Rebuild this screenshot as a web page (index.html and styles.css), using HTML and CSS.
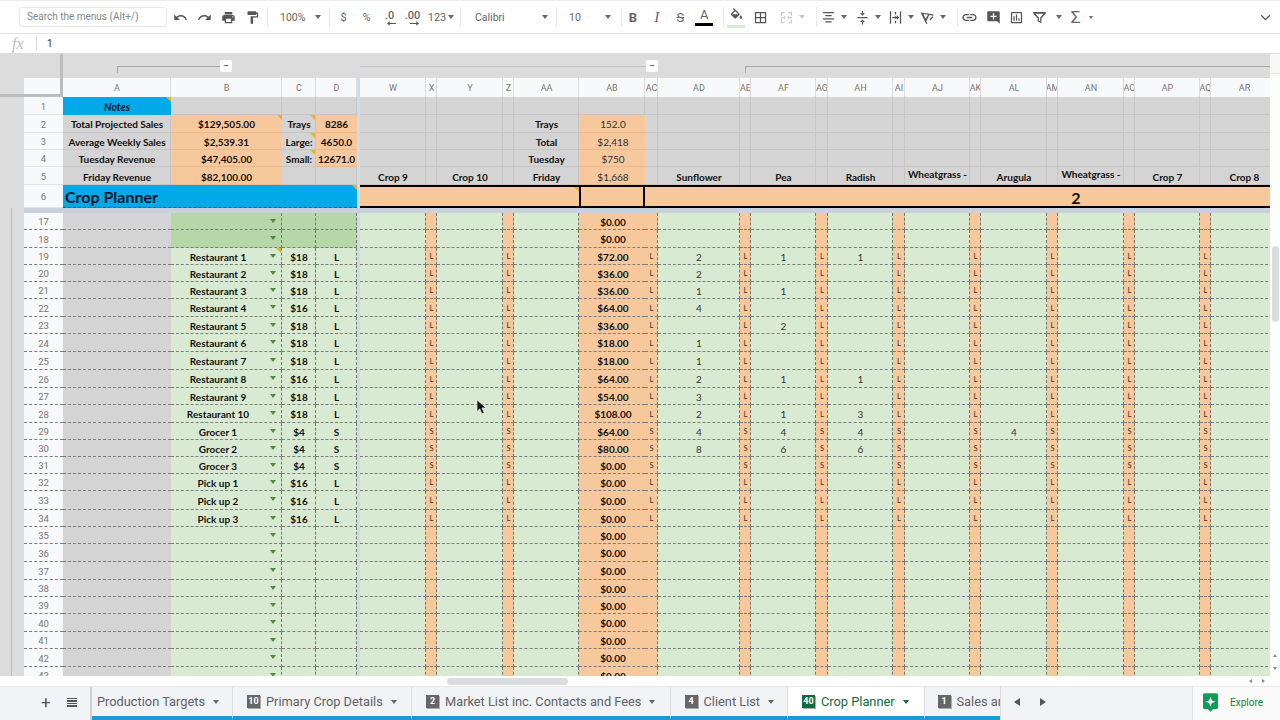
FILE: index.html
```html
<!DOCTYPE html>
<html lang="en">
<head>
<meta charset="utf-8">
<title>Crop Planner</title>
<link rel="stylesheet" href="styles.css">
</head>
<body>
<div class="app">
  <div class="toolbar">
    <div class="search">Search the menus (Alt+/)</div>
    <div class="ti w24"><svg viewBox="0 0 24 24"><path d="M12.5 8c-2.65 0-5.05.99-6.9 2.6L2 7v9h9l-3.62-3.62c1.39-1.16 3.16-1.88 5.12-1.88 3.54 0 6.55 2.31 7.6 5.5l2.37-.78C21.08 11.03 17.15 8 12.5 8z"/></svg></div>
    <div class="ti w24"><svg viewBox="0 0 24 24"><path d="M18.4 10.6C16.55 8.99 14.15 8 11.5 8c-4.65 0-8.58 3.03-9.96 7.22L3.9 16c1.05-3.19 4.05-5.5 7.6-5.5 1.95 0 3.73.72 5.12 1.88L13 16h9V7l-3.6 3.6z"/></svg></div>
    <div class="ti w24"><svg viewBox="0 0 24 24"><path d="M19 8H5c-1.66 0-3 1.34-3 3v6h4v4h12v-4h4v-6c0-1.66-1.34-3-3-3zm-3 11H8v-5h8v5zm3-7c-.55 0-1-.45-1-1s.45-1 1-1 1 .45 1 1-.45 1-1 1zm-1-9H6v4h12V3z"/></svg></div>
    <div class="ti w24"><svg viewBox="0 0 24 24"><path d="M18 4V3c0-.55-.45-1-1-1H5c-.55 0-1 .45-1 1v4c0 .55.45 1 1 1h12c.55 0 1-.45 1-1V6h1v4H9v11c0 .55.45 1 1 1h2c.55 0 1-.45 1-1v-9h8V4h-3z"/></svg></div>
    <div class="sep sep-3"></div>
    <div class="sel sel-zoom"><span>100%</span><i class="caret"></i></div>
    <div class="sep"></div>
    <div class="tt w23 first-fmt">$</div>
    <div class="tt w23">%</div>
    <div class="tt w23 dec">.0<svg viewBox="0 0 10 5"><path d="M10 2H3V0L0 2.500 3 5V3h7z"/></svg></div>
    <div class="tt w23 dec">.00<svg viewBox="0 0 10 5"><path d="M0 2h7V0l3 2.500L7 5V3H0z"/></svg></div>
    <div class="tt w36 num-fmt">123<i class="caret caret-near"></i></div>
    <div class="sep"></div>
    <div class="sel sel-font"><span>Calibri</span><i class="caret"></i></div>
    <div class="sep"></div>
    <div class="sel sel-size"><span>10</span><i class="caret"></i></div>
    <div class="sep"></div>
    <div class="tt w24 bold">B</div>
    <div class="tt w24 ital">I</div>
    <div class="tt w24 strike">S</div>
    <div class="tt w24 color-a"><span>A</span><i class="bar bar-black"></i></div>
    <div class="sep sep-7"></div>
    <div class="ti w25 fill"><svg viewBox="0 0 24 24"><path d="M16.56 8.94L7.620 0 6.210 1.410l2.380 2.380-5.150 5.150c-.59.59-.59 1.540 0 2.120l5.500 5.500c.29.29.68.44 1.060.44s.77-.15 1.060-.44l5.500-5.500c.59-.58.59-1.530 0-2.120zM5.210 10L10 5.210 14.790 10H5.210zM19 11.500s-2 2.170-2 3.500c0 1.100.9 2 2 2s2-.9 2-2c0-1.330-2-3.500-2-3.500z"/></svg><i class="bar bar-green"></i></div>
    <div class="ti w24"><svg viewBox="0 0 24 24"><path d="M3 3v18h18V3H3zm8 16H5v-6h6v6zm0-8H5V5h6v6zm8 8h-6v-6h6v6zm0-8h-6V5h6v6z"/></svg></div>
    <div class="ti w38 off"><svg viewBox="0 0 24 24"><path d="M3 3h6v2H5v4H3zM15 3h6v6h-2V5h-4zM3 15h2v4h4v2H3zM19 15h2v6h-6v-2h4zM3 11h5V9l3 3-3 3v-2H3zM21 11h-5V9l-3 3 3 3v-2h5z"/></svg><i class="caret caret-light"></i></div>
    <div class="sep sep-5"></div>
    <div class="ti w35"><svg viewBox="0 0 24 24"><path d="M3 3h18v2H3zM7 8h10v2H7zM3 13h18v2H3zM7 18h10v2H7z"/></svg><i class="caret"></i></div>
    <div class="ti w33"><svg viewBox="0 0 24 24"><path d="M8 19h3v4h2v-4h3l-4-4-4 4zm8-14h-3V1h-2v4H8l4 4 4-4zM4 11v2h16v-2H4z"/></svg><i class="caret"></i></div>
    <div class="ti w32"><svg viewBox="0 0 24 24"><path d="M3 2h2v20H3zM19 2h2v20h-2zM11 3h2v4h-2zM11 10h2v4h-2zM11 17h2v4h-2zM7 11h7V8l4 4-4 4v-3H7z"/></svg><i class="caret"></i></div>
    <div class="ti w33"><svg viewBox="0 0 24 24"><path d="M2 4l20 3-1 2-6-.9-5 9.900 2 3.500-2 1-9-18.500zM5.500 6.500l3.500 7.500 3.800-6.300zM15 15l5-5 1.500 1.500-5 5z"/></svg><i class="caret"></i></div>
    <div class="sep sep-7"></div>
    <div class="ti w24 link"><svg viewBox="0 0 24 24"><path d="M3.900 12c0-1.710 1.390-3.100 3.100-3.100h4V7H7c-2.760 0-5 2.240-5 5s2.240 5 5 5h4v-1.900H7c-1.710 0-3.100-1.390-3.100-3.100zM8 13h8v-2H8v2zm9-6h-4v1.900h4c1.710 0 3.100 1.390 3.100 3.100s-1.390 3.100-3.100 3.100h-4V17h4c2.760 0 5-2.240 5-5s-2.240-5-5-5z"/></svg></div>
    <div class="ti w24"><svg viewBox="0 0 24 24"><path d="M20 2H4c-1.100 0-2 .9-2 2v12c0 1.100.9 2 2 2h14l4 4V4c0-1.100-.9-2-2-2zm-3 9h-4v4h-2v-4H7V9h4V5h2v4h4v2z"/></svg></div>
    <div class="ti w23"><svg viewBox="0 0 24 24"><path d="M9 17H7v-7h2v7zm4 0h-2V7h2v10zm4 0h-2v-4h2v4zm2 2H5V5h14v14zm0-16H5c-1.100 0-2 .9-2 2v14c0 1.100.9 2 2 2h14c1.100 0 2-.9 2-2V5c0-1.100-.9-2-2-2z"/></svg></div>
    <div class="ti w38"><svg viewBox="0 0 24 24"><path d="M2 3h20v2.500l-7 8V21l-6-3v-4.500l-7-8zM5.500 6l5.500 6.500v4.300l2 1V12.500L18.500 6z"/></svg><i class="caret caret-gap"></i></div>
    <div class="tt w32 sigma"><span>Σ</span><i class="caret caret-small"></i></div>
    <div class="chev"><svg viewBox="0 0 24 24"><path d="M4 8l8 8 8-8" /></svg></div>
  </div>
  <div class="formula">
    <span class="fx">fx</span><span class="fx-sep"></span><span class="fx-val">1</span>
  </div>
  <div class="sheet">
    <div class="gutter">
      <div class="gutter-top"></div>
      <div class="gutter-mid"></div>
      <div class="gutter-low"></div>
    </div>
    <div class="grid-area">
      <div class="groups">
        <div class="handle"></div>
        <div class="bracket b1"></div><div class="minus">−</div>
        <div class="line l2"></div><div class="minus">−</div>
        <div class="bracket b3"></div>
      </div>
      <div id="frozen"></div>
      <div class="freeze-bar"></div>
      <div id="rows"></div>
    </div>
    <div class="vscroll">
      <div class="vs-top"></div>
      <div class="vs-thumb"></div>
      <div class="vs-arrows"><i class="tri-up"></i><i class="tri-down"></i></div>
    </div>
    <svg class="cursor" viewBox="0 0 12 18"><path d="M1 1v13l3-3 2.500 5.500 2.500-1L6.500 10H11z"/></svg>
  </div>
  <div class="hscroll">
    <div class="hs-thumb"></div>
    <div class="hs-arrows"><i class="tri-left"></i><i class="tri-right"></i></div>
  </div>
  <div class="tabs">
    <div class="tab-tools">
      <span class="plus">+</span>
      <span class="menu"><i></i><i></i><i></i><i></i></span>
    </div>
    <div class="tab-strip">
      <div class="tab t1"><span>Production Targets</span><i class="caret"></i></div>
      <div class="tab t2"><b class="key">10</b><span>Primary Crop Details</span><i class="caret"></i></div>
      <div class="tab t3"><b class="key">2</b><span>Market List inc. Contacts and Fees</span><i class="caret"></i></div>
      <div class="tab t4"><b class="key">4</b><span>Client List</span><i class="caret"></i></div>
      <div class="tab t5"><b class="key">40</b><span>Crop Planner</span><i class="caret"></i></div>
      <div class="tab t6"><b class="key">1</b><span>Sales ar</span></div>
    </div>
    <div class="tab-nav"><i class="nav-left"></i><i class="nav-right"></i></div>
    <div class="explore">
      <svg viewBox="0 0 18 22"><path d="M2 0h14a2 2 0 0 1 2 2v15a2 2 0 0 1-2 2h-4l-3 3-3-3H2a2 2 0 0 1-2-2V2a2 2 0 0 1 2-2z" fill="#0f9d58"/><path d="M9 4l1.500 4.500L15 10l-4.500 1.500L9 16l-1.500-4.500L3 10l4.500-1.500z" fill="#fff"/></svg>
      <span>Explore</span>
    </div>
  </div>
</div>
<script src="script.js"></script>
</body>
</html>
```
FILE: styles.css
```css
* { box-sizing: border-box; }
html, body { margin: 0; height: 100%; overflow: hidden; background: #fff; }
body { font-family: "Lato", "Liberation Sans", sans-serif; }
.app { width: 1280px; height: 720px; display: flex; flex-direction: column; overflow: hidden; }

/* toolbar */
.toolbar { height: 34px; flex: none; display: flex; align-items: center; padding-left: 19px; border-top: 1px solid #ececec; border-bottom: 1px solid #e4e4e4; color: #555; font-family: Roboto, sans-serif; }
.search { width: 148px; height: 20px; margin-right: 2px; border: 1px solid #e8e8e8; border-radius: 3px; padding-left: 7px; font-size: 10px; line-height: 18px; color: #80868b; }
.ti, .tt { height: 24px; flex: none; display: flex; align-items: center; justify-content: center; position: relative; }
.ti svg { width: 15px; height: 15px; fill: #555; flex: none; }
.w23 { width: 23px; } .w24 { width: 23.750px; } .w25 { width: 24.750px; } .w32 { width: 32px; } .w33 { width: 33px; } .w35 { width: 35px; } .w36 { width: 36px; } .w38 { width: 38px; }
.sep { width: 1px; height: 20px; background: #e8e8e8; flex: none; margin-right: 1px; }
.sep-3 { margin-left: 3px; margin-right: 0; }
.sep-5 { margin-left: 5px; margin-right: 0; }
.sep-7 { margin-left: 7px; margin-right: 0; }
.caret { display: inline-block; width: 0; height: 0; border-left: 3.500px solid transparent; border-right: 3.500px solid transparent; border-top: 4px solid #666; flex: none; }
.ti .caret { margin-left: 5px; }
.caret-light { border-top-color: #c8c8c8; }
.ti .caret-gap { margin-left: 9px; }
.caret-near { margin-left: 2px; }
.caret-small { border-left-width: 2.500px; border-right-width: 2.500px; border-top-width: 3px; margin-left: 9px; }
.sel { height: 24px; display: flex; align-items: center; justify-content: space-between; font-size: 10.500px; flex: none; color: #666; }
.sel-zoom { width: 61px; padding: 0 8px 0 12px; }
.sel-font { width: 94px; padding: 0 8px 0 13px; }
.sel-size { width: 63px; padding: 0 10px 0 11px; }
.tt { font-size: 11px; color: #666; }
.first-fmt { margin-left: 1px; }
.num-fmt { margin-left: -1px; margin-right: 1px; }
.dec { font-size: 11px; font-weight: 500; padding-bottom: 4px; }
.dec svg { position: absolute; width: 9px; height: 5px; left: 9px; top: 16px; fill: #555; }
.bold { font-weight: 700; font-size: 13px; margin-left: -2px; }
.ital { font-style: italic; font-family: "Liberation Serif", serif; font-size: 15px; }
.strike { text-decoration: line-through; font-size: 13px; }
.color-a { flex-direction: column; font-size: 13px; }
.color-a span { line-height: 13px; }
.bar { display: block; height: 3px; width: 18px; }
.bar-black { background: #000; margin-top: 2px; }
.bar-green { position: absolute; left: 3px; top: 20px; background: #d9ead3; }
.fill svg { margin-top: -4px; }
.off svg { fill: #c9c9c9; }
.link svg { width: 17px; height: 17px; }
.sigma { font-size: 17px; }
.chev { margin-left: auto; width: 22px; display: flex; }
.chev svg { width: 13px; height: 13px; fill: none; stroke: #555; stroke-width: 2.500; margin-left: 1px; }

/* formula */
.formula { height: 20px; flex: none; display: flex; align-items: center; border-bottom: 1px solid #dcdcdc; background: #fff; }
.fx { width: 36px; padding-left: 12px; font-family: "Liberation Serif", serif; font-style: italic; font-size: 16px; color: #bdbdbd; }
.fx-sep { width: 1px; height: 15px; background: #dadada; flex: none; }
.fx-val { margin-left: 10px; font-family: Roboto, sans-serif; font-size: 10px; color: #333; }

/* sheet */
.sheet { height: 622px; flex: none; display: flex; overflow: hidden; position: relative; background: #dcdcdc; }
.gutter { width: 24px; flex: none; display: flex; flex-direction: column; }
.gutter-top { height: 43px; flex: none; border-bottom: 3px solid #bdbdbd; }
.gutter-mid { height: 111px; flex: none; }
.gutter-low { flex: 1; width: 12px; border-right: 1px solid #bfbfbf; }
.grid-area { width: 1246px; flex: none; overflow: hidden; }
.groups { height: 24px; position: relative; display: flex; align-items: flex-start; }
.handle { position: absolute; left: 36px; top: 0; width: 3px; height: 24px; background: #bdbdbd; }
.bracket { height: 7px; margin-top: 12px; border-top: 1px solid #a9a9a9; border-left: 1px solid #a9a9a9; flex: none; }
.b1 { margin-left: 93px; width: 103px; }
.line { height: 1px; margin-top: 12px; background: #bcc5d1; flex: none; }
.l2 { margin-left: 128px; width: 286px; }
.b3 { margin-left: 87px; width: 525px; }
.minus { width: 12px; height: 12px; margin-top: 6px; background: #fff; border-radius: 2px; font: 700 10px/12px Roboto, sans-serif; text-align: center; color: #666; flex: none; }
.row { display: grid; grid-template-columns: 39px 108px 111px 34px 41px 3px 66px 11px 66px 11px 65px 66px 13px 82px 11px 65px 12px 65px 12px 65px 11px 66px 11px 66px 11px 65px 11px 67px; font-size: 10px; color: #111; overflow: hidden; }
.cell { min-width: 0; display: flex; align-items: center; justify-content: center; white-space: nowrap; overflow: hidden; position: relative; font-weight: 700; padding-top: 1px; }
.freeze-bar { height: 5px; background: #c9d1dc; }
.freeze-col { background: #d2dae5; }
.hd { background: #f8f9fa; color: #777; font-family: Roboto, sans-serif; font-weight: 400; font-size: 9px; border-right: 1px solid #dcdcdc; padding-left: 1px; }
.corner { background: #f8f9fa; border-bottom: 3px solid #bdbdbd; border-right: 3px solid #bdbdbd; }
.rh { background: #f8f9fa; color: #777; font-family: Roboto, sans-serif; font-weight: 400; font-size: 9.500px; border-bottom: 1px solid #e2e2e2; }
.gray { background: #d4d4d4; }
.top .gray { border-bottom: 1px solid #c6c6c6; border-right: 1px solid #c6c6c6; padding-left: 1px; }
.top .orange { background: #f6c89c; border-bottom: 1px solid #e8b98c; }
.top .plain { font-weight: 400; color: #333; }
.top.r5 .cell { padding-top: 2px; }
.top.r5 .tight { padding-top: 0; }
.blue { background: #00a9e8; }
.note { font-style: italic; font-size: 10.500px; color: #06122c; }
.orange { background: #f6c89c; }
.cell.abv { padding-left: 2px; }
.green { background: #d9ead3; }
.dgreen { background: #b6d7a8; }
.tight { align-items: flex-start; padding-top: 0; line-height: 14px; }
.rw .cell { border-bottom: 1px dashed #7d7d7d; }
.rw .freeze-col { border-bottom: 0; }
.rw .vd { border-right: 1px dashed #6d7a6d; padding-left: 1px; }
.rw .plain { font-weight: 400; color: #333; }
.rw .sz { font-size: 7.500px; font-weight: 400; color: #333; }
.title { grid-column: span 4; justify-content: flex-start; padding-left: 2px; font-size: 16px; color: #06122c; border-bottom: 1px dashed #555; }
.band { background: #f6c89c; border-top: 2px solid #000; border-bottom: 2px solid #000; font-size: 16px; }
.band-left { grid-column: span 5; }
.band-ab { border-left: 2px solid #000; border-right: 2px solid #000; }
.band-right { grid-column: span 16; padding-left: 229px; color: #111; }
.mark::after { content: ""; position: absolute; top: 0; right: 0; border-top: 5px solid #e6b12e; border-left: 5px solid transparent; }
.dd { position: absolute; right: 5px; top: 6px; border-left: 3.500px solid transparent; border-right: 3.500px solid transparent; border-top: 4px solid #4f8a3c; }
.rw .nudge { padding-right: 16px; padding-left: 0; }
.vscroll { flex: 1; background: #fdfdfb; display: flex; flex-direction: column; align-items: center; }
.vs-top { height: 20px; width: 100%; flex: none; background: #f8f8f8; border-bottom: 1px solid #e6e6e6; }
.vs-thumb { width: 7px; height: 76px; margin-top: 172px; margin-left: 1px; background: #dadce0; border-radius: 4px; flex: none; }
.vs-arrows { margin-top: auto; padding-bottom: 6px; display: flex; flex-direction: column; gap: 10px; align-items: center; }
.tri-up { border-left: 2.500px solid transparent; border-right: 2.500px solid transparent; border-bottom: 3px solid #888; }
.tri-down { border-left: 2.500px solid transparent; border-right: 2.500px solid transparent; border-top: 3px solid #888; }
.cursor { position: absolute; left: 476px; top: 345px; width: 11px; height: 16px; fill: #111; stroke: #fff; stroke-width: .6; }

/* bottom */
.hscroll { height: 10px; flex: none; position: relative; background: #fff; display: flex; align-items: center; }
.hs-thumb { width: 121px; height: 7px; margin-left: 447px; background: #dadce0; border-radius: 4px; }
.hs-arrows { margin-left: auto; margin-right: 15px; display: flex; gap: 10px; }
.tri-left { border-top: 2.500px solid transparent; border-bottom: 2.500px solid transparent; border-right: 3px solid #888; }
.tri-right { border-top: 2.500px solid transparent; border-bottom: 2.500px solid transparent; border-left: 3px solid #888; }
.tabs { height: 34px; flex: none; display: flex; background: #f1f3f4; border-top: 1px solid #e8e8e8; font-family: Roboto, sans-serif; }
.tab-tools { width: 90px; flex: none; display: flex; align-items: center; padding-left: 41px; gap: 16px; padding-bottom: 3px; }
.plus { font-size: 17px; line-height: 17px; color: #555; }
.menu { display: flex; flex-direction: column; gap: 1px; }
.menu i { display: block; width: 10px; height: 1.500px; background: #555; }
.tab-strip { width: 910px; flex: none; display: flex; overflow: hidden; border-left: 2px solid #d0d0d0; }
.tab { flex: none; height: 33px; display: flex; align-items: center; border-bottom: 4px solid #1a9ad6; border-right: 1px solid #dadce0; font-size: 12.800px; color: #5f6368; white-space: nowrap; }
.tab .caret { margin-left: 8px; }
.key { display: inline-block; width: 13px; height: 13px; margin-right: 6px; background: #666; color: #fff; font: 700 9px/13px Roboto, sans-serif; text-align: center; box-shadow: 1px 1px 0 #aaa; flex: none; }
.t1 { width: 141px; padding-left: 5px; }
.t2 { width: 179px; padding-left: 14px; }
.t3 { width: 258.500px; padding-left: 14px; }
.t4 { width: 117.500px; padding-left: 14px; }
.t5 { width: 136.500px; padding-left: 14px; background: #fff; color: #0f6b3e; }
.t5 .key { background: #0f6b3e; }
.t5 .caret { border-top-color: #0f6b3e; }
.t6 { width: 76px; padding-left: 13px; border-right: 0; }
.tab-nav { width: 193px; flex: none; display: flex; align-items: center; gap: 20px; padding-left: 13px; padding-bottom: 3px; border-left: 1px solid #d8d8d8; border-right: 1px solid #e0e0e0; }
.nav-left { border-top: 4.500px solid transparent; border-bottom: 4.500px solid transparent; border-right: 6px solid #555; }
.nav-right { border-top: 4.500px solid transparent; border-bottom: 4.500px solid transparent; border-left: 6px solid #555; }
.explore { flex: 1; display: flex; align-items: center; background: #fafafa; padding-left: 10px; padding-bottom: 3px; gap: 12px; font-size: 10px; color: #188038; }
.explore svg { width: 15px; height: 19px; flex: none; }
```
FILE: script.js
```js
var COLS = ["A","B","C","D","W","X","Y","Z","AA","AB","AC","AD","AE","AF","AG","AH","AI","AJ","AK","AL","AM","AN","AO","AP","AQ","AR"];
var NARROW = { X:1, Z:1, AC:1, AE:1, AG:1, AI:1, AK:1, AM:1, AO:1, AQ:1 };
var TOP = {
  1: { A: "Notes" },
  2: { A: "Total Projected Sales", B: "$129,505.00", C: "Trays", D: "8286", AA: "Trays", AB: "152.0" },
  3: { A: "Average Weekly Sales", B: "$2,539.31", C: "Large:", D: "4650.0", AA: "Total", AB: "$2,418" },
  4: { A: "Tuesday Revenue", B: "$47,405.00", C: "Small:", D: "12671.0", AA: "Tuesday", AB: "$750" },
  5: { A: "Friday Revenue", B: "$82,100.00", W: "Crop 9", Y: "Crop 10", AA: "Friday", AB: "$1,668", AD: "Sunflower", AF: "Pea", AH: "Radish", AJ: "Wheatgrass -", AL: "Arugula", AN: "Wheatgrass -", AP: "Crop 7", AR: "Crop 8" }
};
var TOP_H = { 1: 18, 2: 18, 3: 17, 4: 17, 5: 18 };
var CLIENTS = [
  ["Restaurant 1","$18","L",72], ["Restaurant 2","$18","L",36], ["Restaurant 3","$18","L",36], ["Restaurant 4","$16","L",64],
  ["Restaurant 5","$18","L",36], ["Restaurant 6","$18","L",18], ["Restaurant 7","$18","L",18], ["Restaurant 8","$16","L",64],
  ["Restaurant 9","$18","L",54], ["Restaurant 10","$18","L",108], ["Grocer 1","$4","S",64], ["Grocer 2","$4","S",80],
  ["Grocer 3","$4","S",0], ["Pick up 1","$16","L",0], ["Pick up 2","$16","L",0], ["Pick up 3","$16","L",0]
];
var QTY = {
  19: { AD: 2, AF: 1, AH: 1 }, 20: { AD: 2 }, 21: { AD: 1, AF: 1 }, 22: { AD: 4 }, 23: { AF: 2 }, 24: { AD: 1 }, 25: { AD: 1 },
  26: { AD: 2, AF: 1, AH: 1 }, 27: { AD: 3 }, 28: { AD: 2, AF: 1, AH: 3 }, 29: { AD: 4, AF: 4, AH: 4, AL: 4 }, 30: { AD: 8, AF: 6, AH: 6 }
};
var HEIGHTS = [17,18,17,17,17,18,17,18,18,18,17,18,17,17,17,17,19,17,17,18,18,17,17,18,17,18,17];

function cell(cls, text) {
  var d = document.createElement("div");
  d.className = "cell " + cls;
  if (text !== undefined && text !== "") d.textContent = text;
  return d;
}
function makeRow(cls, h) {
  var r = document.createElement("div");
  r.className = "row " + cls;
  r.style.height = h + "px";
  return r;
}

var frozen = document.getElementById("frozen");
var head = makeRow("", 19);
head.appendChild(cell("corner"));
COLS.forEach(function (c, i) {
  head.appendChild(cell("hd", c));
  if (i === 3) head.appendChild(cell("freeze-col"));
});
frozen.appendChild(head);

[1,2,3,4,5].forEach(function (n) {
  var r = makeRow(n === 5 ? "top r5" : "top", TOP_H[n]);
  r.appendChild(cell("rh", n));
  COLS.forEach(function (c, i) {
    var t = TOP[n][c];
    var cls = "gray";
    if (n === 1 && c === "A") cls = "blue note mark";
    else if (n > 1 && c === "B") cls = "orange";
    else if (n > 1 && n < 5 && c === "D") cls = "orange";
    else if (n > 1 && c === "AB") cls = "orange plain abv";
    if (n > 1 && n < 5 && c === "C") cls += " mark";
    if (n === 2 && c === "B") cls += " mark";
    if (n === 5 && (c === "AJ" || c === "AN")) cls += " tight";
    r.appendChild(cell(cls, t));
    if (i === 3) r.appendChild(cell("freeze-col"));
  });
  frozen.appendChild(r);
});

var band = makeRow("", 23);
band.appendChild(cell("rh", 6));
band.appendChild(cell("blue title mark", "Crop Planner"));
band.appendChild(cell("freeze-col"));
band.appendChild(cell("band band-left mark"));
band.appendChild(cell("band band-ab"));
band.appendChild(cell("band band-right", "2"));
frozen.appendChild(band);

var rows = document.getElementById("rows");
HEIGHTS.forEach(function (h, idx) {
  var n = 17 + idx;
  var cl = n >= 19 && n <= 34 ? CLIENTS[n - 19] : null;
  var dark = n < 19;
  var q = QTY[n] || {};
  var r = makeRow("rw", h);
  r.appendChild(cell("rh", n));
  COLS.forEach(function (c, i) {
    var d;
    if (c === "A") d = cell("gray");
    else if (c === "B") {
      d = cell((dark ? "dgreen" : "green") + " vd nudge" + (n === 19 ? " mark" : ""), cl ? cl[0] : "");
      var dd = document.createElement("i");
      dd.className = "dd";
      d.appendChild(dd);
    }
    else if (c === "C") d = cell((dark ? "dgreen" : "green") + " vd", cl ? cl[1] : "");
    else if (c === "D") d = cell((dark ? "dgreen" : "green") + " vd", cl ? cl[2] : "");
    else if (c === "AB") d = cell("orange abv", "$" + (cl ? cl[3] : 0) + ".00");
    else if (NARROW[c]) d = cell("orange sz vd", cl ? cl[2] : "");
    else d = cell("green plain vd", q[c] !== undefined ? q[c] : "");
    r.appendChild(d);
    if (i === 3) r.appendChild(cell("freeze-col"));
  });
  rows.appendChild(r);
});
```
